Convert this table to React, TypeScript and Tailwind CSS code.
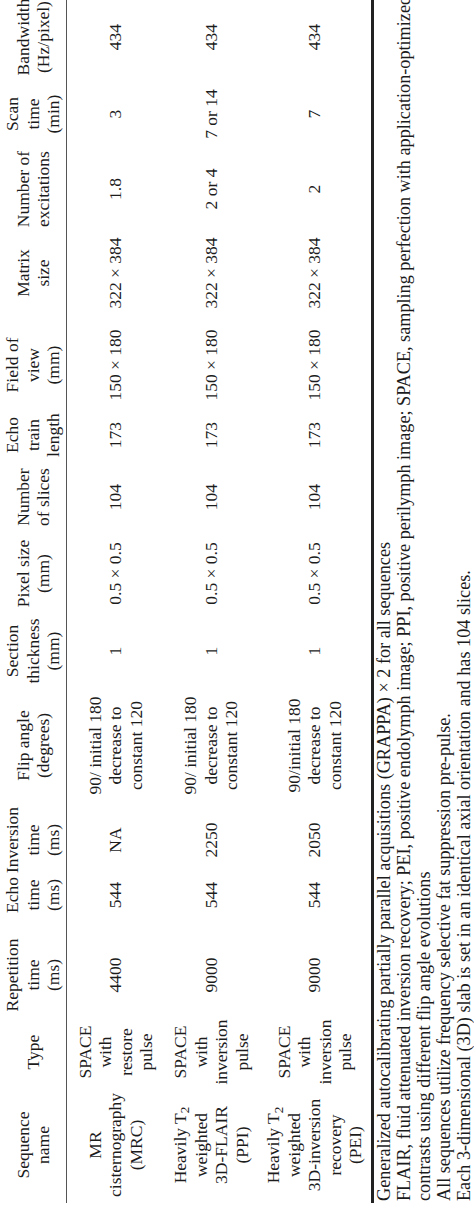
import type { ReactNode } from "react"

type Lines = ReactNode[]

// column widths follow the printed table; pads nudge each column's centre
const grid =
  "grid grid-cols-[105px_85px_78px_68px_74px_95px_86px_77px_69px_66px_81px_88px_80px_76px_80px]"

const pads = [
  "pl-[11px]",
  "pl-[7px]",
  "pr-[2px]",
  "pl-[12px]",
  "pr-[20px]",
  "",
  "pl-[8px]",
  "",
  "pl-[7px]",
  "pr-[4px]",
  "pr-[11px]",
  "pl-[4px]",
  "pl-[4px]",
  "pr-[2px]",
  "pr-[4px]",
]

const heavily = (
  <>
    Heavily T<sub>2</sub>
  </>
)

const header: Lines[] = [
  ["Sequence", "name"],
  ["Type"],
  ["Repetition", "time", "(ms)"],
  ["Echo", "time", "(ms)"],
  ["Inversion", "time", "(ms)"],
  ["Flip angle", "(degrees)"],
  ["Section", "thickness", "(mm)"],
  ["Pixel size", "(mm)"],
  ["Number", "of slices"],
  ["Echo", "train", "length"],
  ["Field of", "view", "(mm)"],
  ["Matrix", "size"],
  ["Number of", "excitations"],
  ["Scan", "time", "(min)"],
  ["Bandwidth", "(Hz/pixel)"],
]

const shared = (nex: string, scan: string): Lines[] => [
  ["1"],
  ["0.5 × 0.5"],
  ["104"],
  ["173"],
  ["150 × 180"],
  ["322 × 384"],
  [nex],
  [scan],
  ["434"],
]

const rows: { h: string; cells: Lines[] }[] = [
  {
    h: "h-[97px]",
    cells: [
      ["MR", "cisternography", "(MRC)"],
      ["SPACE", "with", "restore", "pulse"],
      ["4400"],
      ["544"],
      ["NA"],
      ["90/ initial 180", "decrease to", "constant 120"],
      ...shared("1.8", "3"),
    ],
  },
  {
    h: "h-[94px]",
    cells: [
      [heavily, "weighted", "3D-FLAIR", "(PPI)"],
      ["SPACE", "with", "inversion", "pulse"],
      ["9000"],
      ["544"],
      ["2250"],
      ["90/ initial 180", "decrease to", "constant 120"],
      ...shared("2 or 4", "7 or 14"),
    ],
  },
  {
    h: "h-[116px] border-b-[3px] border-[#222]",
    cells: [
      [heavily, "weighted", "3D-inversion", "recovery", "(PEI)"],
      ["SPACE", "with", "inversion", "pulse"],
      ["9000"],
      ["544"],
      ["2050"],
      ["90/initial 180", "decrease to", "constant 120"],
      ...shared("2", "7"),
    ],
  },
]

const notes: ReactNode[] = [
  "Generalized autocalibrating partially parallel acquisitions (GRAPPA) × 2 for all sequences",
  <>
    FLAIR, fluid attenuated inversion recovery; PEI, positive endolymph image; PPI, positive perilymph image; SPACE,
    sampling perfection with application-optimized
    <span className="inline-block w-[5px] h-[7px] bg-[#222] align-[6px]" />
  </>,
  "contrasts using different flip angle evolutions",
  "All sequences utilize frequency selective fat suppression pre-pulse.",
  "Each 3-dimensional (3D) slab is set in an identical axial orientation and has 104 slices.",
]

function Cell({ lines, col }: { lines: Lines; col: number }) {
  return (
    <div className={`flex flex-col items-center justify-center whitespace-nowrap text-center ${pads[col]}`}>
      {lines.map((line, i) => (
        <span key={i}>{line}</span>
      ))}
    </div>
  )
}

export default function App() {
  return (
    <div className="w-[474px] h-[1208px] overflow-hidden bg-white">
      {/* the table is printed sideways, so lay it out upright and turn it */}
      <div className="w-[1208px] h-[474px] origin-top-left -rotate-90 translate-y-[1208px] font-['Liberation_Serif',serif] text-[#1c1c1c] text-[17.5px] leading-[20.5px]">
        <div className={`${grid} -mt-[5px] h-[67px] border-b border-[#555]`}>
          {header.map((lines, i) => (
            <Cell key={i} lines={lines} col={i} />
          ))}
        </div>

        {rows.map((row, r) => (
          <div key={r} className={`${grid} ${row.h}`}>
            {row.cells.map((lines, i) => (
              <Cell key={i} lines={lines} col={i} />
            ))}
          </div>
        ))}

        <div className="pl-[2px] text-[18.2px] leading-[20px] whitespace-nowrap">
          {notes.map((note, i) => (
            <p key={i}>{note}</p>
          ))}
        </div>
      </div>
    </div>
  )
}
